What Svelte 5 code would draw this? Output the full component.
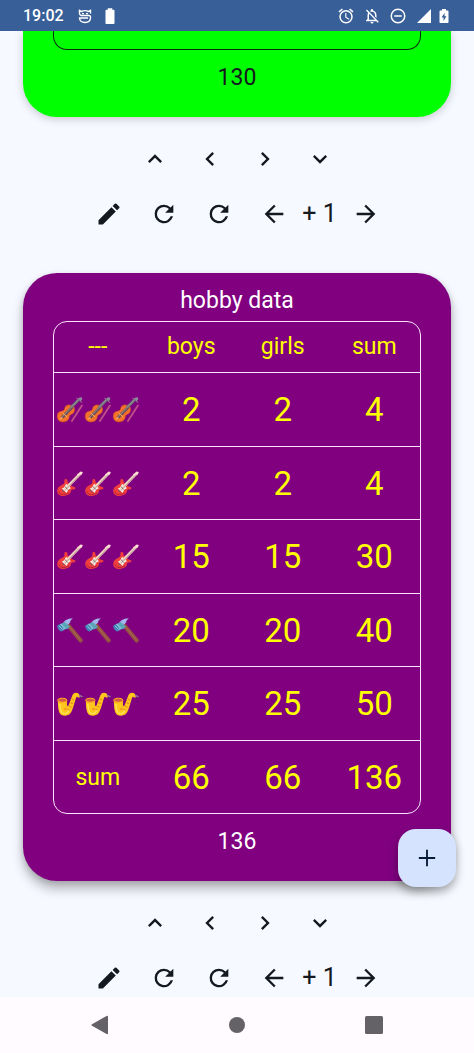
<script>
  const icons = {
    up: "M7.41 15.41 12 10.83l4.59 4.58L18 14l-6-6-6 6z",
    left: "M15.41 16.59 10.83 12l4.58-4.59L14 6l-6 6 6 6z",
    right: "M8.59 16.59 13.17 12 8.59 7.41 10 6l6 6-6 6z",
    down: "M7.41 8.59 12 13.17l4.59-4.58L18 10l-6 6-6-6z",
    edit: "M3 17.25V21h3.75L17.81 9.94l-3.75-3.75zM20.71 7.04a1 1 0 0 0 0-1.41l-2.34-2.34a1 1 0 0 0-1.41 0l-1.83 1.83 3.75 3.75z",
    refresh: "M17.65 6.35A7.96 7.96 0 0 0 12 4a8 8 0 1 0 7.73 10h-2.08A6 6 0 1 1 12 6c1.66 0 3.14.69 4.22 1.78L13 11h7V4z",
    back: "M20 11H7.83l5.59-5.59L12 4l-8 8 8 8 1.41-1.41L7.83 13H20z",
    forward: "M12 4l-1.41 1.41L16.17 11H4v2h12.17l-5.58 5.59L12 20l8-8z"
  };

  const columns = ["---", "boys", "girls", "sum"];

  let title = $state("hobby data");
  let rows = $state([
    { hobby: "violin", boys: 2, girls: 2 },
    { hobby: "guitar", boys: 2, girls: 2 },
    { hobby: "guitar", boys: 15, girls: 15 },
    { hobby: "hammer", boys: 20, girls: 20 },
    { hobby: "saxophone", boys: 25, girls: 25 }
  ]);
  let totals = $state({ boys: 66, girls: 66, all: 136 });
  let previousTotal = $state(130);
</script>

{#snippet icon(name)}
  <svg class="icon" viewBox="0 0 24 24" aria-hidden="true"><path d={icons[name]} /></svg>
{/snippet}

{#snippet controls()}
  <div class="controls">
    <div class="line">
      <button aria-label="up">{@render icon("up")}</button>
      <button aria-label="left">{@render icon("left")}</button>
      <button aria-label="right">{@render icon("right")}</button>
      <button aria-label="down">{@render icon("down")}</button>
    </div>
    <div class="line">
      <button aria-label="edit">{@render icon("edit")}</button>
      <button aria-label="reset rows">{@render icon("refresh")}</button>
      <button aria-label="reset columns">{@render icon("refresh")}</button>
      <button aria-label="previous step">{@render icon("back")}</button>
      <span class="step">+ 1</span>
      <button aria-label="next step">{@render icon("forward")}</button>
    </div>
  </div>
{/snippet}

{#snippet picture(name)}
  <svg class="picture" viewBox="0 0 28 28" aria-hidden="true">
    {#if name === "violin"}
      <path d="M15.800 25.200 26 9.500" stroke="#c9508c" stroke-width="1.600" stroke-linecap="round" />
      <path d="M14.800 25 25 9" stroke="#8d3f76" stroke-width=".5" />
      <path d="M1.500 18.200c-.8 3 .2 6.300 3 7.300 2.900 1 6.300.2 8-2.200 1-1.500.3-2.800 1.400-4 1-1.100 3-1 4-3 1.200-2.300.8-5-1-6.300-2-1.500-5.500-1.500-7.300.4-1.400 1.500-.7 3-2 4-1.500 1-5.300.5-6.100 3.800z" fill="#f4722b" stroke="#c9521f" stroke-width=".6" />
      <path d="m5 20.500 2.400 2L17.500 12l-2.200-2z" fill="#6d5257" />
      <path d="m15 11.500 8-8" stroke="#6c6d78" stroke-width="3" />
      <path d="m22 2.200 3.400-1.100 1 1.900-2 2.700z" fill="#8b8c98" />
      <path d="m20.500 1.800 1.500 1.700m2.500 2.200 1.700.8M5 22 22 4" stroke="#b9aaa8" stroke-width=".7" />
      <path d="m6.500 16.800 4.600 4.200M3.500 23l3-.5" stroke="#ffad55" stroke-width="1" />
    {:else if name === "guitar"}
      <path d="M1.500 19.300c-.9 2.800.5 5.700 3.400 6.500 3.400.9 8-.7 9.400-2.700.8-1.300.2-2.300 1.100-3.200.9-.9 3.100 0 4-1.500.5-1-.8-2-3-2l-4.800-4.200c.1-2.400-.9-3.700-2.200-3.100-1.700.8-.5 3.300-1.400 4.400-1 1.400-5.300 2-6.500 5.800z" fill="#ef3e3c" />
      <path d="M3 21.500c.3 2 1.900 3.200 4.300 3 2.700-.2 5-1 5.700-2" fill="none" stroke="#b92436" stroke-width="1" />
      <path d="M5.800 18.500c2.200-.5 3.300-2.200 4.200-4.800l5 4.500c-2.600.7-3.600 2-4.100 4.800z" fill="#f3f3ee" />
      <path d="m8.500 19.700 14-14.300" stroke="#f0d5c0" stroke-width="2.800" />
      <path d="m21 4.600 3.600-3 2.200.3-.8 2.300-3.500 2.900z" fill="#ffe0d3" />
      <path d="m9 20.500 15-16" stroke="#987779" stroke-width=".6" />
      <path d="m6.200 20 2.200 2.400m.8-5.500 2.300 2.200" stroke="#69666f" stroke-width="1" />
    {:else if name === "hammer"}
      <path d="m10 9 3.300-2.400 13 15.300c1 1.200.7 2.200-.3 3.100-1.100.9-2.200.9-3.100-.3z" fill="#944f43" />
      <path d="m12.300 8.200 12.400 15.200" stroke="#b76b55" stroke-width="1" />
      <path d="M7.500 5.200C10.500 2 13.500 1 17 1.800c-1.700.6-3 2-2.900 3.800l-3.800 3.600-4.100-1z" fill="#a6b6ed" />
      <path d="m5.500 6.700 3.300-1.800 5.200 4.800-2.700 2.300-3.300.4z" fill="#5aa6b8" />
      <path d="m2.500 8.600 2.800-2.300 4.200 5-2.700 2.700z" fill="#80bfd5" />
      <ellipse cx="4.300" cy="11" rx="2.300" ry="3.700" transform="rotate(-38 4.300 11)" fill="#4382b8" />
      <path d="m3 8.700 3.600 4" stroke="#a6d8e9" stroke-width=".8" />
    {:else}
      <path d="M1.800 10.500c.4 6-.3 15 6.500 15.300 5.500.2 7.300-3.500 8.700-8l3-9.800c.5-1.500 1.300-1.400 2-.5l2 .1-1-3.600c-2.500-2.300-5.700-1.500-6.800 1.700l-3.500 9.300c-.7 2-1.700 1.200-1.800-.8l.2-3.700z" fill="#ffc71c" />
      <path d="M4 14c.1 5 1 9 3.500 9.500 3 .5 4.700-1 6-4" fill="none" stroke="#ffe45b" stroke-width="1.400" />
      <ellipse cx="6.300" cy="10.200" rx="4.700" ry="2" fill="#d75b42" stroke="#ffab24" stroke-width="1" />
      <path d="m23 5.200 3.500 1.700" stroke="#8b7793" stroke-width="1.600" />
      <path d="m16 9 2.300 1m-3.700 2.600 2.400 1m-3.700 2.600 2.300 1m-4 1.700 2 1.400" stroke="#ed8b20" stroke-width="1.200" />
      <circle cx="9.500" cy="19" r="1.200" fill="#f19324" />
    {/if}
  </svg>
{/snippet}

<div class="screen">
  <header class="status">
    <time>19:02</time>
    <svg class="glyph app" viewBox="0 0 16 16" aria-hidden="true">
      <path d="M4 7.500c-.8-.3-1.500-1-1.500-2V2.500l2 1C6.500 2.500 9.500 2.500 11.500 3.500l2-1v3M4 7.500h8c1 0 1.500.5 1.500 2 0 3-2.200 5-5.500 5s-5.300-1.800-5.500-4.500h8.500" fill="none" stroke="currentColor" stroke-width="1.400" />
      <path d="M5 5h2v1.300H5zm4 0h2v1.300H9z" />
    </svg>
    <svg class="glyph charge" viewBox="0 0 16 16" aria-hidden="true">
      <path d="M6 1h4v1.500h1.300c.5 0 .7.300.7.700v11c0 .5-.2.800-.7.800H4.700c-.5 0-.7-.3-.7-.8v-11c0-.4.2-.7.7-.7H6z" />
    </svg>
    <span class="space"></span>
    <svg class="glyph wide" viewBox="0 0 24 24" aria-hidden="true">
      <path d="m22 5.720-4.600-3.860-1.290 1.530 4.600 3.860zM7.880 3.390 6.600 1.860 2 5.710l1.290 1.530zM12.500 8H11v6l4.750 2.850.75-1.230-4-2.370zM12 4a9 9 0 1 0 0 18 9 9 0 0 0 0-18zm0 16a7 7 0 1 1 0-14 7 7 0 0 1 0 14z" />
    </svg>
    <svg class="glyph wide" viewBox="0 0 24 24" aria-hidden="true">
      <path d="M20 18.690 7.840 6.140 5.270 3.490 4 4.760l2.800 2.800A8 8 0 0 0 6 11v5l-2 2v1h13.730l2 2L21 19.730zM16 17H8v-6c0-.7.100-1.300.300-1.900l7.700 7.900zM12 22a2 2 0 0 0 2-2h-4c0 1.100.9 2 2 2zm4-11v1.600l2 2V11c0-3.070-1.640-5.640-4.500-6.320V4a1.500 1.500 0 0 0-3 0v.68c-.5.120-.9.290-1.300.500l1.500 1.500C13.700 5.800 16 8 16 11z" />
    </svg>
    <svg class="glyph wide" viewBox="0 0 24 24" aria-hidden="true">
      <path d="M7 11h10v2H7zm5-9a10 10 0 1 0 0 20 10 10 0 0 0 0-20zm0 18a8 8 0 1 1 0-16 8 8 0 0 1 0 16z" />
    </svg>
    <svg class="glyph" viewBox="0 0 18 18" aria-hidden="true"><path d="M16 2v14H2z" /></svg>
    <svg class="glyph battery" viewBox="1 0 14 16" aria-hidden="true">
      <path fill-rule="evenodd" d="M6 1h4v1.500h1.700c.5 0 .8.300.8.800v10.900c0 .5-.3.800-.8.800H4.300c-.5 0-.8-.3-.8-.8V3.300c0-.5.300-.8.800-.8H6zm2.600 4L5.500 9.500h2V13l3-4.700h-1.900z" />
    </svg>
  </header>

  <main>
    <section class="card previous">
      <div class="frame"></div>
      <p>{previousTotal}</p>
    </section>
    {@render controls()}

    <section class="card current">
      <h2>{title}</h2>
      <table>
        <thead>
          <tr>
            {#each columns as column}
              <th scope="col">{column}</th>
            {/each}
          </tr>
        </thead>
        <tbody>
          {#each rows as row}
            <tr>
              <th scope="row" aria-label={row.hobby}>
                <span class="pictures">
                  {#each [1, 2, 3] as _}
                    {@render picture(row.hobby)}
                  {/each}
                </span>
              </th>
              <td>{row.boys}</td>
              <td>{row.girls}</td>
              <td>{row.boys + row.girls}</td>
            </tr>
          {/each}
          <tr>
            <th scope="row">sum</th>
            <td>{totals.boys}</td>
            <td>{totals.girls}</td>
            <td>{totals.all}</td>
          </tr>
        </tbody>
      </table>
      <p>{totals.all}</p>
    </section>
    {@render controls()}
  </main>

  <button class="add" aria-label="add">
    <svg class="icon" viewBox="0 0 24 24" aria-hidden="true"><path d="M19 12.800h-6.200V19h-1.600v-6.200H5v-1.600h6.200V5h1.600v6.200H19z" /></svg>
  </button>

  <nav>
    <button aria-label="back">
      <svg viewBox="0 0 20 20" aria-hidden="true"><path d="M18 1.700v16.600c0 .8-.7 1.200-1.400.8L2 10.800c-.7-.4-.7-1.200 0-1.600L16.600.9c.7-.4 1.400 0 1.400.8z" /></svg>
    </button>
    <button aria-label="home">
      <svg viewBox="0 0 20 20" aria-hidden="true"><circle cx="10" cy="10" r="8" /></svg>
    </button>
    <button aria-label="recent apps">
      <svg viewBox="0 0 20 20" aria-hidden="true"><rect x="1" y="1" width="18" height="18" rx="1.500" /></svg>
    </button>
  </nav>
</div>

<style>
:global(body) {
    background: #f6f9ff;
}
.screen {
    position: relative;
    display: flex;
    flex-direction: column;
    height: 100vh;
    overflow: hidden;
    background: #f6f9ff;
    color: #14181f;
    font-family: Roboto, "Liberation Sans", sans-serif;
}
button {
    display: flex;
    align-items: center;
    justify-content: center;
    padding: 0;
    border: 0;
    background: none;
    color: inherit;
    cursor: pointer;
}
svg {
    display: block;
    fill: currentColor;
}
.icon {
    width: 28px;
    height: 28px;
}
.status {
    display: flex;
    align-items: center;
    flex: none;
    gap: 4px;
    height: 31px;
    padding: 0 23px;
    box-sizing: border-box;
    background: #385f98;
    color: #fff;
}
.status time {
    font-size: 16px;
    font-weight: 500;
}
.glyph {
    width: 18px;
    height: 18px;
}
.app {
    width: 16px;
    height: 16px;
    margin: 0 4px 0 9px;
}
.wide {
    margin-right: 4px;
}
.battery {
    width: 14px;
}
.space {
    flex: 1;
}
main {
    flex: 1;
    min-height: 0;
    overflow: hidden;
}
.card {
    margin: 0 23px;
    padding: 0 30px;
    border-radius: 34px;
    text-align: center;
    font-size: 23px;
    line-height: 28px;
}
.card p,
.card h2 {
    margin: 0;
    font-size: 23px;
    font-weight: 400;
}
.card p {
    padding: 14px 0 25px;
}
.previous {
    border-radius: 0 0 34px 34px;
    background: #00ff00;
    box-shadow: 0 2px 10px #0003;
}
.frame {
    height: 18px;
    border: 1px solid #0b2a0b;
    border-top: 0;
    border-radius: 0 0 14px 14px;
}
.current {
    margin-top: 32px;
    padding-top: 14px;
    background: #800080;
    color: #fff;
    box-shadow: 0 8px 12px #0004, 0 2px 6px #0002;
}
table {
    width: 100%;
    height: 493px;
    margin-top: 6px;
    box-sizing: border-box;
    table-layout: fixed;
    border: 1px solid #fbe4fb;
    border-radius: 14px;
    border-spacing: 0;
    color: #ffff00;
}
th,
td {
    padding: 2px 0 0;
    font-weight: 400;
}
th:first-child {
    padding-right: 4px;
}
thead th {
    height: 50px;
    padding-top: 0;
    box-sizing: border-box;
}
tbody th,
tbody td {
    border-top: 1px solid #fbe4fb;
}
td {
    font-size: 33px;
}
.pictures {
    display: flex;
    justify-content: center;
}
.picture {
    width: 28px;
    height: 28px;
    fill: none;
}
.controls {
    padding-top: 14px;
}
.line {
    display: flex;
    align-items: center;
    justify-content: center;
    height: 55px;
}
.line button {
    width: 55px;
    height: 55px;
}
.step {
    width: 37px;
    text-align: center;
    font-size: 25px;
    white-space: nowrap;
}
.add {
    position: absolute;
    right: 18px;
    bottom: 166px;
    width: 58px;
    height: 58px;
    border-radius: 18px;
    background: #d5e3ff;
    color: #071b36;
    box-shadow: 0 5px 10px #0005;
}
nav {
    display: grid;
    grid-template-columns: repeat(3, 1fr);
    flex: none;
    height: 56px;
    padding: 0 31px;
    background: #fffbff;
    color: #646266;
}
nav svg {
    width: 20px;
    height: 20px;
}
</style>
